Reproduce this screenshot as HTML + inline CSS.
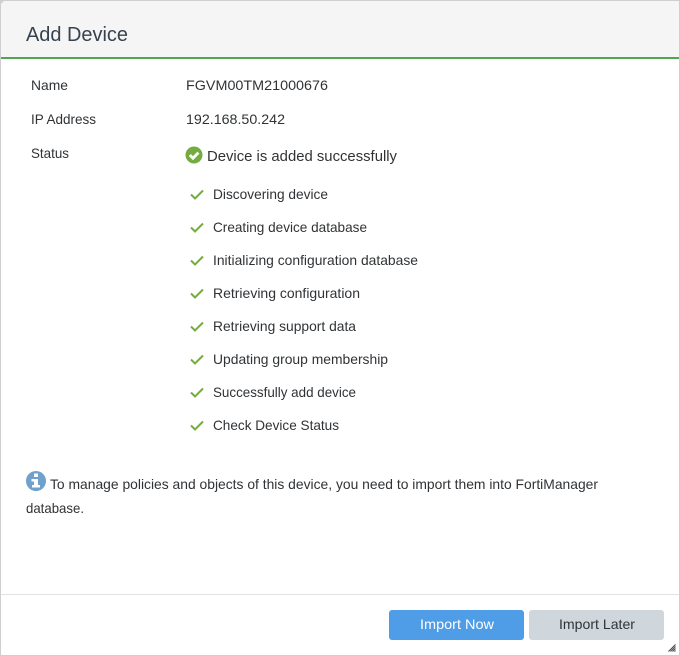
<!DOCTYPE html>
<html><head><meta charset="utf-8"><style>
html,body{margin:0;padding:0;width:680px;height:656px;overflow:hidden;background:#fff}
svg{display:block}
text{font-family:"Liberation Sans",sans-serif;font-size:14px;fill:#303336}
</style></head><body>
<svg width="680" height="656" viewBox="0 0 680 656" xmlns="http://www.w3.org/2000/svg">
<rect width="680" height="656" fill="#cfcfcf"/>
<path d="M4 1H679V655H1V4Z" fill="#fff"/>
<path d="M4 1H679V57H1V4Z" fill="#f5f5f5"/>
<rect x="1" y="57" width="678" height="2" fill="#4fa84f"/>
<text x="26" y="41" style="font-size:20px;fill:#37424f" textLength="102" lengthAdjust="spacingAndGlyphs">Add Device</text>
<text x="31" y="90" textLength="37" lengthAdjust="spacingAndGlyphs">Name</text>
<text x="31" y="124" textLength="65" lengthAdjust="spacingAndGlyphs">IP Address</text>
<text x="31" y="158" textLength="38" lengthAdjust="spacingAndGlyphs">Status</text>
<text x="186" y="90" textLength="142" lengthAdjust="spacingAndGlyphs">FGVM00TM21000676</text>
<text x="186" y="124" textLength="99" lengthAdjust="spacingAndGlyphs">192.168.50.242</text>
<circle cx="194" cy="155" r="8.5" fill="#74ac3f"/>
<path d="M189.800 155l3.200 3.200 5.400-5.600" fill="none" stroke="#fff" stroke-width="2.800"/>
<text x="207" y="161" style="font-size:15px" textLength="190" lengthAdjust="spacingAndGlyphs">Device is added successfully</text>
<g fill="none" stroke="#74ac3f" stroke-width="2">
<path d="M191 194.500l4 4 8-8"/>
<path d="M191 227.500l4 4 8-8"/>
<path d="M191 260.500l4 4 8-8"/>
<path d="M191 293.500l4 4 8-8"/>
<path d="M191 326.500l4 4 8-8"/>
<path d="M191 359.500l4 4 8-8"/>
<path d="M191 392.500l4 4 8-8"/>
<path d="M191 425.500l4 4 8-8"/>
</g>
<text x="213" y="199" textLength="115" lengthAdjust="spacingAndGlyphs">Discovering device</text>
<text x="213" y="232" textLength="154" lengthAdjust="spacingAndGlyphs">Creating device database</text>
<text x="213" y="265" textLength="205" lengthAdjust="spacingAndGlyphs">Initializing configuration database</text>
<text x="213" y="298" textLength="147" lengthAdjust="spacingAndGlyphs">Retrieving configuration</text>
<text x="213" y="331" textLength="143" lengthAdjust="spacingAndGlyphs">Retrieving support data</text>
<text x="213" y="364" textLength="175" lengthAdjust="spacingAndGlyphs">Updating group membership</text>
<text x="213" y="397" textLength="143" lengthAdjust="spacingAndGlyphs">Successfully add device</text>
<text x="213" y="430" textLength="126" lengthAdjust="spacingAndGlyphs">Check Device Status</text>
<circle cx="36" cy="481" r="10" fill="#6fa1cc"/>
<path d="M34 473.500h4v3.500h-4zM31.500 479h6.500v6h2v2.500h-8v-2.500h2v-3.500h-2.500z" fill="#fff"/>
<text x="50" y="489" textLength="548" lengthAdjust="spacingAndGlyphs">To manage policies and objects of this device, you need to import them into FortiManager</text>
<text x="26" y="513" textLength="58" lengthAdjust="spacingAndGlyphs">database.</text>
<rect x="1" y="594" width="678" height="1" fill="#e3e3e3"/>
<rect x="389" y="610" width="135" height="30" rx="3" fill="#4e9de6"/>
<rect x="529" y="610" width="135" height="30" rx="3" fill="#cfd7dd"/>
<text x="420" y="629" style="fill:#fff" textLength="74" lengthAdjust="spacingAndGlyphs">Import Now</text>
<text x="559" y="629" style="fill:#303336" textLength="76" lengthAdjust="spacingAndGlyphs">Import Later</text>
<path d="M668.500 651.500l7-7M670.500 651.500l5-5M672.500 651.500l3-3M674.500 651.500l1-1" stroke="#444" stroke-width="1" fill="none"/>
</svg>
</body></html>
